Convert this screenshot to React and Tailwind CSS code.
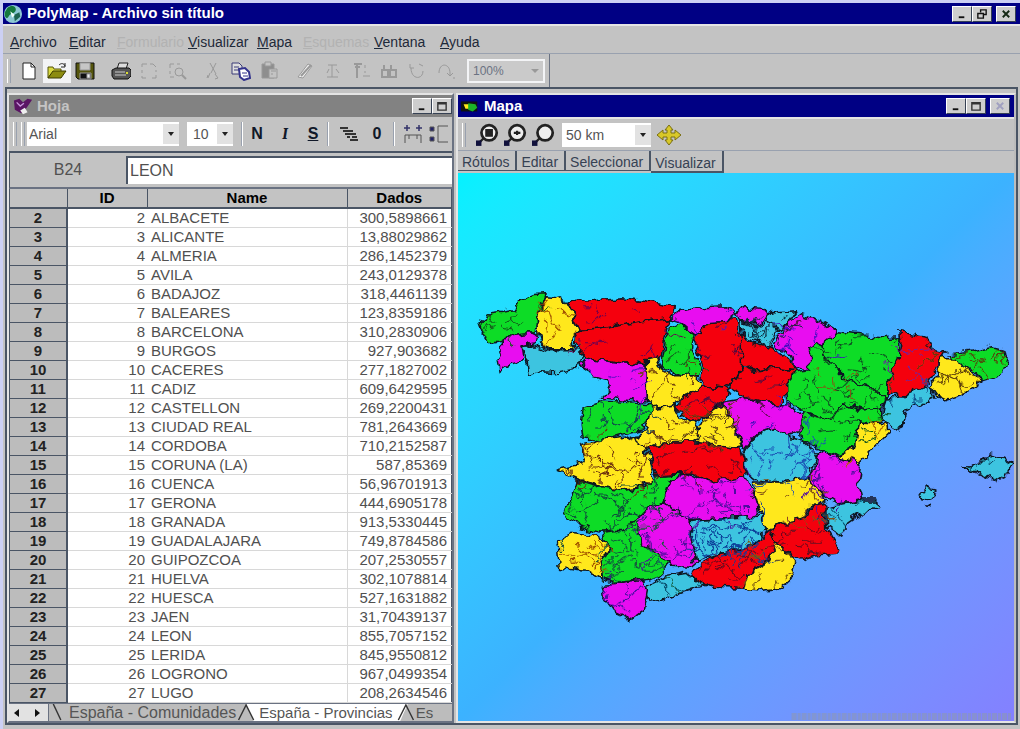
import React, { useState } from 'react';

const rows = [
  [2, 'ALBACETE', '300,5898661'],
  [3, 'ALICANTE', '13,88029862'],
  [4, 'ALMERIA', '286,1452379'],
  [5, 'AVILA', '243,0129378'],
  [6, 'BADAJOZ', '318,4461139'],
  [7, 'BALEARES', '123,8359186'],
  [8, 'BARCELONA', '310,2830906'],
  [9, 'BURGOS', '927,903682'],
  [10, 'CACERES', '277,1827002'],
  [11, 'CADIZ', '609,6429595'],
  [12, 'CASTELLON', '269,2200431'],
  [13, 'CIUDAD REAL', '781,2643669'],
  [14, 'CORDOBA', '710,2152587'],
  [15, 'CORUNA (LA)', '587,85369'],
  [16, 'CUENCA', '56,96701913'],
  [17, 'GERONA', '444,6905178'],
  [18, 'GRANADA', '913,5330445'],
  [19, 'GUADALAJARA', '749,8784586'],
  [20, 'GUIPOZCOA', '207,2530557'],
  [21, 'HUELVA', '302,1078814'],
  [22, 'HUESCA', '527,1631882'],
  [23, 'JAEN', '31,70439137'],
  [24, 'LEON', '855,7057152'],
  [25, 'LERIDA', '845,9550812'],
  [26, 'LOGRONO', '967,0499354'],
  [27, 'LUGO', '208,2634546']
];

const GREEN = '#0bdc28';
const YELLOW = '#ffe81a';
const RED = '#f5060c';
const PINK = '#e80cf0';
const CYAN = '#3cc4e0';

const provinces = [
  [GREEN, '478,323 490,314 512,311 519,300 530,295 545,294 541,307 536,316 534,333 520,334 508,336 498,342 488,344 482,334'],
  [YELLOW, '545,296 556,297 566,304 572,315 575,325 578,332 571,338 571,350 549,350 540,344 537,335 535,318 541,307'],
  [PINK, '500,340 510,335 528,333 536,335 534,343 520,346 522,360 510,364 498,373 496,358 501,350'],
  [CYAN, '520,347 534,345 549,351 571,351 580,348 583,354 578,364 571,370 556,373 540,372 528,376 526,362'],
  [RED, '566,302 590,301 622,299 650,303 674,307 668,319 640,322 620,326 590,331 578,330 574,318'],
  [RED, '578,331 600,329 640,322 668,319 662,340 660,358 650,364 620,363 585,358 573,347 574,337'],
  [PINK, '585,358 610,362 645,365 645,402 600,398 610,388 605,380 592,376 578,366'],
  [GREEN, '582,407 598,401 620,402 652,405 652,414 640,430 620,434 600,440 582,438 580,424'],
  [YELLOW, '645,360 655,358 660,370 672,376 698,376 698,388 682,398 672,405 655,410 645,400'],
  [GREEN, '664,340 668,328 680,324 693,334 690,348 700,366 697,376 680,376 660,368 662,355'],
  [PINK, '668,319 676,312 700,308 725,307 736,314 728,320 708,324 695,335 688,330 680,323'],
  [RED, '692,340 706,322 735,320 738,335 740,345 740,366 735,378 722,388 700,386 702,366'],
  [RED, '738,335 750,343 770,348 788,360 793,370 775,368 755,372 740,366 740,345'],
  [RED, '740,368 755,372 775,368 793,370 788,385 780,403 768,403 745,398 728,386 735,378'],
  [RED, '700,386 722,388 728,386 722,402 710,413 690,423 674,408 682,398'],
  [PINK, '735,312 745,307 762,309 766,318 755,325 738,321'],
  [CYAN, '738,322 755,327 768,320 778,330 776,333 768,346 752,341 740,335'],
  [CYAN, '766,316 775,312 795,311 788,322 778,330 768,324'],
  [PINK, '783,327 800,314 812,318 832,330 834,335 820,344 808,350 808,369 792,367 790,356 772,347'],
  [GREEN, '820,344 834,333 860,335 880,338 898,337 898,360 884,385 884,398 870,388 848,382 830,365 822,355'],
  [GREEN, '808,350 820,344 822,355 830,365 848,382 870,388 884,398 880,408 862,410 840,405 830,420 804,413 786,402 785,388 792,372 808,370'],
  [GREEN, '830,420 840,405 862,410 880,408 880,420 866,426 853,446 835,455 820,450 800,440 798,424 804,413'],
  [RED, '898,333 925,338 930,350 944,352 934,370 925,384 900,396 884,393 886,380 896,362 900,345'],
  [GREEN, '948,354 965,352 990,347 1003,350 1005,360 1000,375 980,381 968,370 955,362'],
  [YELLOW, '940,358 950,358 960,362 970,375 980,382 960,395 945,400 935,395 928,385 936,375'],
  [CYAN, '884,398 900,397 920,387 928,386 934,398 915,405 904,410 902,424 890,428 880,420'],
  [YELLOW, '857,422 885,424 886,434 870,450 858,463 836,456 853,446'],
  [PINK, '817,452 838,457 858,463 856,480 861,500 835,503 815,490 806,478 814,468'],
  [CYAN, '825,507 845,503 860,500 875,500 876,506 855,516 845,523 838,536 826,526'],
  [YELLOW, '752,482 775,482 805,478 817,490 825,500 808,508 802,520 785,521 765,532 760,515 754,500'],
  [RED, '811,506 823,504 825,528 836,548 834,554 812,556 800,560 784,552 774,540 768,532 785,521 805,517'],
  [CYAN, '740,455 755,435 775,427 790,437 800,440 817,454 806,478 780,482 755,480 745,472'],
  [PINK, '722,402 745,398 768,403 785,404 802,417 800,430 785,435 775,427 755,435 742,450 735,432 724,415'],
  [YELLOW, '700,420 722,404 730,420 740,447 725,449 700,444 688,435'],
  [YELLOW, '650,408 672,405 680,420 692,424 700,430 695,443 660,443 640,450 632,442 645,428'],
  [YELLOW, '578,445 600,439 625,436 642,446 650,465 652,480 640,486 620,490 595,485 575,478 556,470 580,464 584,456'],
  [RED, '645,448 665,443 700,443 738,449 745,475 735,480 710,482 690,473 655,475'],
  [PINK, '668,482 680,473 710,481 745,476 755,500 757,514 740,518 690,520 668,508 662,500'],
  [GREEN, '576,480 600,487 625,490 645,486 655,476 682,473 668,482 662,500 640,512 636,520 620,532 600,532 575,525 562,512 572,495'],
  [YELLOW, '556,545 570,532 595,535 608,545 600,560 602,580 585,570 558,567'],
  [GREEN, '600,532 620,530 636,520 640,545 655,550 668,562 660,575 642,580 612,582 602,578 601,560 608,548'],
  [PINK, '636,520 640,512 662,500 672,510 690,520 690,540 695,560 688,566 670,565 655,550 640,545'],
  [CYAN, '690,521 740,517 760,516 765,530 745,548 715,555 695,560 690,540'],
  [RED, '690,570 715,555 745,548 768,532 776,542 772,555 745,575 742,588 710,587 695,580'],
  [YELLOW, '774,541 784,552 795,563 790,578 778,588 760,590 742,588 745,575 768,560'],
  [CYAN, '646,585 668,575 685,572 705,585 680,592 660,600 648,602 644,592'],
  [PINK, '600,584 620,583 642,580 646,590 642,610 630,619 612,610 602,596'],
  [CYAN, '963,468 980,463 988,455 1000,458 1011,463 1005,475 995,482 980,475'],
  [CYAN, '918,495 925,488 934,490 930,499 920,500']
];

// [x, y, width, height, number of strokes, color]
const riverZones = [
  [480, 298, 60, 40, 10, '#145a1c'],
  [536, 298, 40, 50, 9, '#a05000'],
  [578, 302, 85, 58, 12, '#6c0050'],
  [582, 362, 62, 36, 7, '#5010c0'],
  [582, 404, 66, 32, 11, '#143c50'],
  [645, 362, 52, 80, 16, '#6c3c10'],
  [664, 328, 30, 46, 6, '#145a1c'],
  [672, 312, 60, 16, 4, '#5010c0'],
  [692, 325, 98, 85, 16, '#500840'],
  [742, 312, 48, 32, 14, '#102c40'],
  [775, 320, 55, 45, 9, '#4010c0'],
  [790, 336, 108, 112, 44, '#0c5020'],
  [800, 370, 78, 30, 5, '#8c5014'],
  [888, 338, 50, 50, 9, '#7020a0'],
  [930, 350, 72, 44, 26, '#5a3c08'],
  [882, 390, 48, 34, 9, '#10508c'],
  [850, 424, 34, 36, 5, '#b06400'],
  [730, 402, 70, 35, 6, '#5010c0'],
  [742, 430, 72, 50, 22, '#1c50b4'],
  [812, 456, 46, 44, 12, '#5008a0'],
  [825, 502, 45, 30, 8, '#0c5070'],
  [752, 482, 70, 45, 14, '#805014'],
  [780, 510, 52, 44, 9, '#640820'],
  [690, 408, 48, 38, 18, '#5c3c14'],
  [560, 440, 90, 48, 40, '#6c3010'],
  [646, 445, 95, 34, 12, '#640820'],
  [666, 476, 88, 42, 22, '#5008a0'],
  [565, 484, 98, 45, 34, '#10463c'],
  [558, 534, 46, 42, 14, '#a05000'],
  [602, 525, 62, 56, 26, '#145a3c'],
  [638, 505, 55, 60, 14, '#5008a0'],
  [692, 518, 70, 38, 44, '#0c3c98'],
  [694, 540, 80, 46, 10, '#640820'],
  [745, 545, 48, 44, 11, '#7c5a10'],
  [645, 572, 56, 26, 8, '#0c5070'],
  [602, 584, 42, 30, 10, '#4008a0'],
  [966, 458, 42, 22, 6, '#0c5070']
];

function buildRivers() {
  let seed = 17;
  const rand = () => {
    seed = (seed * 16807) % 2147483647;
    return seed / 2147483647;
  };
  const result = [];
  riverZones.forEach(([x, y, w, h, count, color]) => {
    let d = '';
    for (let i = 0; i < count; i++) {
      d += `M${Math.round(x + rand() * w)} ${Math.round(y + rand() * h)}`;
      const dx = rand() * 14 - 7;
      const dy = rand() * 12 - 6;
      for (let j = 0; j < 3; j++) {
        d += `l${Math.round(dx + rand() * 8 - 4)} ${Math.round(dy + rand() * 8 - 4)}`;
      }
    }
    result.push({ d, color });
  });
  return result;
}

const rivers = buildRivers();

const SpainMap = () => (
  <svg
    viewBox="457 174 555 546"
    className="block w-full h-full"
    preserveAspectRatio="xMidYMid meet"
    role="img"
    aria-label="Mapa"
  >
    <defs>
      <filter id="coast" x="-5%" y="-5%" width="110%" height="110%">
        <feTurbulence type="fractalNoise" baseFrequency="0.11" numOctaves="2" seed="4" />
        <feDisplacementMap in="SourceGraphic" scale="11" xChannelSelector="R" yChannelSelector="G" />
      </filter>
      <clipPath id="land">
        {provinces.map(([, points], i) => (
          <polygon key={i} points={points} />
        ))}
      </clipPath>
    </defs>
    <g filter="url(#coast)">
      <g stroke="#0c1420" strokeWidth="1.5" strokeLinejoin="round">
        {provinces.map(([fill, points], i) => (
          <polygon key={i} points={points} fill={fill} />
        ))}
        <path d="M924 506l5 0l2 2M989 487l2 1M897 426l6-3l2 2l-5 3z" fill="#0c1420" />
      </g>
      <g clipPath="url(#land)" fill="none" strokeWidth="1">
        {rivers.map((r, i) => (
          <path key={i} d={r.d} stroke={r.color} />
        ))}
      </g>
    </g>
    <path d="M790 716h220" stroke="#8c98b4" strokeOpacity="0.6" strokeWidth="7" strokeDasharray="5 1 3 1" />
  </svg>
);

const icons = {
  nuevo: (
    <>
      <path d="M4 2h8l4 4v12H4z" fill="#fff" stroke="#222" />
      <path d="M12 2v4h4" fill="none" stroke="#222" />
    </>
  ),
  abrir: (
    <>
      <path d="M1 17V6h5l1 2h7v3H6z" fill="#d8d840" stroke="#55550a" />
      <path d="M1 17l5-7h13l-5 7z" fill="#8c8c10" stroke="#3c3c00" />
      <path d="M12 4c2-2 5-2 6 1m0-3v4h-4" fill="none" stroke="#222" />
    </>
  ),
  guardar: (
    <>
      <path d="M1 2h18v16H3l-2-2z" fill="#55550c" stroke="#111" />
      <path d="M5 2h10v7H5z" fill="#c6c6c6" />
      <path d="M5 12h11v6H5z" fill="#111" />
      <path d="M12 13h3v4h-3z" fill="#eee" />
    </>
  ),
  imprimir: (
    <>
      <path d="M6 8l2-6h9l-2 6" fill="#ddd" stroke="#222" />
      <path d="M1 9l4-2h13l2 2v6l-3 3H3l-2-3z" fill="#555" stroke="#111" />
      <path d="M4 11h10M4 14h11" stroke="#ccc" />
      <path d="M15 12h2" stroke="#dd3" strokeWidth="2" />
    </>
  ),
  pagina: <path d="M3 3h5M3 3v3M3 9v3M3 15v2h4M11 3h3l3 3M17 9v2M17 14v3h-4" />,
  vista: (
    <>
      <path d="M3 3h4M10 3h3M3 3v4M3 10v3M3 16h4" />
      <circle cx="12" cy="11" r="4" />
      <path d="M15 14l4 4" strokeWidth="2" />
    </>
  ),
  cortar: <path d="M7 2l6 11M13 2L8 12M7 12l-2 5M12 13l3 4l-3 1M5 14l-1 3" />,
  copiar: (
    <>
      <path d="M1 2h7l3 3v8H1z" fill="#ddd" stroke="#3c3c78" />
      <path d="M3 6h5M3 9h6" stroke="#3c3c78" />
      <path d="M8 8l6-1l4 4l1 6l-6 2l-4-3z" fill="#fff" stroke="#33338c" strokeWidth="2" />
      <path d="M11 12h5M12 15h5" stroke="#33338c" />
    </>
  ),
  pegar: (
    <>
      <path d="M3 3h12v14H3z" fill="#8e8e8e" />
      <path d="M6 1h6v4H6zM10 8h8v9h-8z" fill="#c3c3c3" />
      <path d="M12 10h5M12 13h2" />
    </>
  ),
  borrar: (
    <>
      <path d="M3 16L13 3l4 2L8 17z" fill="#eee" />
      <path d="M6 15L16 4" strokeWidth="2" />
    </>
  ),
  sumar: <path d="M5 4h9M9 4v12M4 16h11M6 8l-2 4M13 8l3 4" />,
  insertar: (
    <>
      <path d="M3 3h8M4 6h5M6 3v14" strokeWidth="2" />
      <path d="M14 4v3M14 10v2M12 15h7" />
    </>
  ),
  buscar: (
    <>
      <path d="M5 4v5M12 4v5M3 9h6v7H3zM11 9h6v7h-6z" strokeWidth="2" />
      <path d="M9 11h3" />
    </>
  ),
  deshacer: <path d="M3 3v4h4M4 7c0 12 12 12 12 3M12 3l4 2" />,
  rehacer: <path d="M4 12c0-11 11-10 11 0M15 12v3M12 12l3 3l3-3M18 17h2" />
};

const ToolButton = ({ name, label, active, disabled }) => (
  <button
    type="button"
    aria-label={label}
    disabled={disabled}
    className={`flex h-6 w-7 shrink-0 items-center justify-center ${active ? 'bg-gray-100' : ''}`}
  >
    <svg viewBox="0 0 20 20" className="h-5 w-5" fill="none" stroke="#999">
      {icons[name]}
    </svg>
  </button>
);

const toolGroups = [
  [
    ['nuevo', 'Nuevo'],
    ['abrir', 'Abrir', true],
    ['guardar', 'Guardar']
  ],
  [
    ['imprimir', 'Imprimir'],
    ['pagina', 'Página', false, true],
    ['vista', 'Vista previa', false, true]
  ],
  [
    ['cortar', 'Cortar', false, true],
    ['copiar', 'Copiar'],
    ['pegar', 'Pegar', false, true]
  ],
  [
    ['borrar', 'Borrar', false, true],
    ['sumar', 'Sumar', false, true],
    ['insertar', 'Insertar', false, true],
    ['buscar', 'Buscar', false, true],
    ['deshacer', 'Deshacer', false, true],
    ['rehacer', 'Rehacer', false, true]
  ]
];

const windowGlyphs = {
  min: <path d="M3 10h6" stroke="#111" strokeWidth="2" />,
  max: <path d="M2 3h9v8H2zM2 4h9" fill="none" stroke="#333" strokeWidth="1.5" />,
  restore: (
    <>
      <path d="M5 5V2h6v5H8" fill="none" stroke="#111" strokeWidth="1.5" />
      <path d="M2 6h6v5H2z" fill="none" stroke="#111" strokeWidth="1.5" />
    </>
  ),
  close: <path d="M3 3l7 7M10 3l-7 7" stroke="#142814" strokeWidth="2" />,
  closeDim: <path d="M3 3l7 7M10 3l-7 7" stroke="#a0a0c0" strokeWidth="2" />
};

const WindowButton = ({ glyph, label }) => (
  <button
    type="button"
    aria-label={label}
    className="flex h-4 w-5 shrink-0 items-center justify-center border border-t-white border-l-white border-r-gray-700 border-b-gray-700 bg-[#cecece]"
  >
    <svg viewBox="0 0 13 13" className="h-3 w-3">
      {windowGlyphs[glyph]}
    </svg>
  </button>
);

const Grip = () => <div className="h-6 w-1 shrink-0 border-l border-white border-r border-r-gray-400"></div>;

const Separator = () => <div className="h-6 w-0.5 shrink-0 border-l border-gray-400 bg-white"></div>;

const DropDown = ({ label, value, className }) => (
  <div className={`flex h-6 shrink-0 items-center bg-white ${className}`}>
    <select aria-label={label} defaultValue={value} className="min-w-0 flex-1 appearance-none bg-transparent text-sm text-[#555] outline-none">
      <option>{value}</option>
    </select>
    <span className="flex h-5 w-4 items-center justify-center bg-[#e2e2e2]">
      <svg viewBox="0 0 8 8" className="h-2 w-2">
        <path d="M1 2h6L4 6z" fill="#222" />
      </svg>
    </span>
  </div>
);

const menus = [
  ['A', 'rchivo', 'w-[59px]'],
  ['E', 'ditar', 'w-[48px]'],
  ['F', 'ormulario', 'w-[71px]', true],
  ['V', 'isualizar', 'w-[69px]'],
  ['M', 'apa', 'w-[46px]'],
  ['E', 'squemas', 'w-[71px]', true],
  ['V', 'entana', 'w-[66px]'],
  ['A', 'yuda', 'w-[60px]']
];

const ZoomIcon = ({ label, children }) => (
  <button type="button" aria-label={label} className="flex h-6 w-7 shrink-0 items-center justify-center">
    <svg viewBox="0 0 22 22" className="h-6 w-6" fill="none" stroke="#222">
      <circle cx="12" cy="9" r="7" fill="#eee" strokeWidth="2.5" />
      <path d="M7 14l-4 4" strokeWidth="2" />
      <path d="M0 16h5v5H0z" fill="#11113c" stroke="none" />
      {children}
    </svg>
  </button>
);

const Sheet = ({ cell, setCell }) => (
  <section className="flex min-h-0 min-w-0 flex-col overflow-hidden border-2 border-t-[#e4e4e4] border-l-[#e4e4e4] border-r-gray-500 border-b-gray-500">
    <header className="flex h-[22px] shrink-0 items-center bg-[#828282]">
      <svg viewBox="0 0 22 20" className="mx-1 h-5 w-5 shrink-0">
        <path d="M1 4l6-2l4 4l5-4l5 1l-6 9l-6 6l-7-4z" fill="#5a1464" />
        <path d="M4 6l4 4l4-3" fill="none" stroke="#c896dc" strokeWidth="1.5" />
        <path d="M8 15l5-3l3 5l-5 2z" fill="#eee" />
      </svg>
      <h2 className="flex-1 text-[15px] font-bold text-[#c4c4c4]">Hoja</h2>
      <WindowButton glyph="min" label="Minimizar hoja" />
      <WindowButton glyph="max" label="Maximizar hoja" />
    </header>

    <div className="flex h-9 shrink-0 items-center overflow-hidden border-b-2 border-gray-600">
      <div className="flex w-[18px] shrink-0 gap-1 pl-1">
        <Grip />
        <Grip />
      </div>
      <DropDown label="Fuente" value="Arial" className="w-[152px] pl-0.5" />
      <DropDown label="Tamaño" value="10" className="ml-2 w-[46px] pl-1.5" />
      <div className="ml-2 flex">
        <Separator />
      </div>
      <button type="button" className="w-7 shrink-0 text-base font-black text-gray-900">N</button>
      <button type="button" className="w-7 shrink-0 font-serif text-base font-black text-gray-900 italic">I</button>
      <button type="button" className="w-7 shrink-0 text-base font-black text-gray-900 underline">S</button>
      <Separator />
      <button type="button" aria-label="Formato de número" className="ml-1 flex w-8 shrink-0 justify-center">
        <svg viewBox="0 0 20 18" className="h-5 w-5" stroke="#333" strokeWidth="2">
          <path d="M1 3h8M4 6h10M6 9h11M8 12h3M13 12h5M11 15h8" />
        </svg>
      </button>
      <button type="button" className="w-6 shrink-0 text-base font-black text-gray-900">0</button>
      <div className="mx-1 flex">
        <Separator />
      </div>
      <button type="button" aria-label="Ancho de columna" className="flex w-7 shrink-0 justify-center">
        <svg viewBox="0 0 20 20" className="h-5 w-5" fill="none" stroke="#33336a">
          <path d="M1 4h6M4 1v6M13 4h6M16 1v6" strokeWidth="1.5" />
          <path d="M2 19v-8h16v8M6 11v4M14 11v4" stroke="#555" />
        </svg>
      </button>
      <button type="button" aria-label="Alto de fila" className="flex w-6 shrink-0 justify-center">
        <svg viewBox="0 0 20 20" className="h-5 w-5" fill="none" stroke="#555">
          <path d="M1 3h4v4H1zM1 13h4v4H1z" fill="#22226a" />
          <path d="M19 2H9v16h10" />
        </svg>
      </button>
    </div>

    <div className="flex h-9 shrink-0 items-center border-b-2 border-gray-500 border-l border-l-gray-600 text-base text-[#505050]">
      <label htmlFor="cell" className="w-[116px] text-center">B24</label>
      <input
        id="cell"
        value={cell}
        onChange={e => setCell(e.target.value)}
        className="h-7 min-w-0 flex-1 border-t-2 border-l-2 border-gray-600 bg-white pl-0.5 text-base outline-none"
      />
    </div>

    <div className="min-h-0 flex-1 overflow-hidden border-l border-gray-600 bg-white">
      <table className="w-full table-fixed border-collapse text-[15px] leading-[18px] text-[#505050]">
        <colgroup>
          <col className="w-[57px]" />
          <col className="w-[80px]" />
          <col className="w-[200px]" />
          <col />
        </colgroup>
        <thead>
          <tr className="h-[19px] border-b-2 border-gray-600 bg-[#c3c3c3] text-[15px] leading-4 text-black">
            <th className="border-r border-gray-600 p-0"></th>
            <th className="border-r border-gray-600 p-0">ID</th>
            <th className="border-r border-gray-600 p-0">Name</th>
            <th className="border-r border-gray-600 p-0">Dados</th>
          </tr>
        </thead>
        <tbody>
          {rows.map(([id, name, dados]) => (
            <tr key={id} className="h-[19px]">
              <th className="border-r-2 border-b border-gray-600 bg-[#bcbcbc] p-0 text-[#222]">{id}</th>
              <td className="border-b border-[#d8d8d8] p-0 pr-0.5 text-right">{id}</td>
              <td className="border-b border-[#d8d8d8] p-0 pl-1">{name}</td>
              <td className="border-l border-r border-b border-[#d8d8d8] border-r-gray-600 p-0 pr-1 text-right">{dados}</td>
            </tr>
          ))}
        </tbody>
      </table>
    </div>

    <nav className="flex h-[18px] shrink-0 items-stretch overflow-hidden border-t border-gray-500 bg-[#bcbcbc] text-[15px] leading-4 text-[#555]">
      <button type="button" aria-label="Anterior" className="w-5 shrink-0 bg-[#e2e2e2] pl-1">
        <svg viewBox="0 0 8 8" className="h-2 w-2"><path d="M6 0v8L1 4z" fill="#111" /></svg>
      </button>
      <button type="button" aria-label="Siguiente" className="w-5 shrink-0 border-r border-gray-500 bg-[#e2e2e2] pl-1">
        <svg viewBox="0 0 8 8" className="h-2 w-2"><path d="M2 0v8l5-4z" fill="#111" /></svg>
      </button>
      <svg viewBox="0 0 18 18" className="w-[18px] shrink-0"><path d="M4 0l8 17" stroke="#333" strokeWidth="1.5" /></svg>
      <button type="button" className="shrink-0 pl-0.5 whitespace-nowrap text-[16px]">España - Comunidades</button>
      <svg viewBox="0 0 24 18" className="w-6 shrink-0">
        <path d="M10 0h14v18h-6z" fill="#fff" />
        <path d="M2 17L10 1l8 16" fill="none" stroke="#333" strokeWidth="1.5" />
      </svg>
      <button type="button" className="-mx-px shrink-0 bg-white whitespace-nowrap">España - Provincias</button>
      <svg viewBox="0 0 24 18" className="w-6 shrink-0">
        <path d="M0 0h16L8 18H0z" fill="#fff" />
        <path d="M6 17L14 1l8 16" fill="none" stroke="#333" strokeWidth="1.5" />
      </svg>
      <button type="button" className="shrink-0">Es</button>
    </nav>
  </section>
);

const MapWindow = () => {
  const tabs = ['Rótulos', 'Editar', 'Seleccionar', 'Visualizar'];
  const [tab, setTab] = useState('Visualizar');

  return (
    <section className="flex min-h-0 min-w-0 flex-col border-2 border-[#e4e4e4] border-r-[#bcbcbc]">
      <header className="flex h-[22px] shrink-0 items-center bg-[#000084] pr-1">
        <svg viewBox="0 0 22 20" className="ml-0.5 h-5 w-5 shrink-0">
          <path d="M1 5h18v11H1z" fill="#101410" />
          <path d="M4 8h6v5H6z" fill="#ffe81a" />
          <path d="M9 7l8 1l2 4l-5 4l-5-2z" fill="#1cb428" />
        </svg>
        <h2 className="ml-1 flex-1 text-[15px] font-bold text-white">Mapa</h2>
        <WindowButton glyph="min" label="Minimizar mapa" />
        <WindowButton glyph="max" label="Maximizar mapa" />
        <div className="ml-1 flex">
          <WindowButton glyph="closeDim" label="Cerrar mapa" />
        </div>
      </header>

      <div className="flex h-[34px] shrink-0 items-center border-t-2 border-b border-t-[#e4e4e4] border-b-gray-400">
        <div className="flex w-4 shrink-0 gap-1 pl-1">
          <Grip />
        </div>
        <ZoomIcon label="Acercar">
          <path d="M9 6h6v6H9z" fill="#222" />
        </ZoomIcon>
        <ZoomIcon label="Alejar">
          <path d="M9 9h6M12 7v4" strokeWidth="2" />
        </ZoomIcon>
        <ZoomIcon label="Ver todo" />
        <DropDown label="Escala" value="50 km" className="ml-1 w-[89px] pl-1" />
        <button type="button" aria-label="Desplazar" className="ml-1 flex h-6 w-7 items-center justify-center">
          <svg viewBox="0 0 24 20" className="h-5 w-6">
            <path d="M12 0l4 5h-2v3h4V5l6 5l-6 5v-3h-4v3h2l-4 5l-4-5h2v-3H6v3l-6-5l6-5v3h4V5H8z" fill="#d8c828" stroke="#786e14" />
          </svg>
        </button>
      </div>

      <nav className="flex h-[22px] shrink-0 items-start text-sm leading-4 text-gray-700">
        {tabs.map(t => (
          <button
            key={t}
            type="button"
            onClick={() => setTab(t)}
            className={`shrink-0 border-r-2 border-gray-600 pr-1.5 pl-1 ${
              t === tab ? 'h-[22px] border-b-2 pt-1 leading-4' : 'h-5 border-b pt-0.5 leading-4'
            }`}
          >
            {t}
          </button>
        ))}
      </nav>

      <div className="min-h-0 flex-1 bg-linear-to-br from-[#04f2ff] via-[#3cb2ff] to-[#8480ff]">
        <SpainMap />
      </div>
    </section>
  );
};

const App = () => {
  const [cell, setCell] = useState('LEON');

  return (
    <div className="flex h-screen flex-col overflow-hidden border-t-3 border-l-3 border-[#ccd0f4] bg-[#c3c3c3] font-['Liberation_Sans',Arial,sans-serif]">
      <header className="flex h-[21px] shrink-0 items-center bg-[#000084] pr-1">
        <svg viewBox="0 0 22 22" className="mr-1 h-5 w-5 shrink-0">
          <circle cx="11" cy="11" r="10" fill="#8cc8d4" />
          <path d="M5 4c5-4 10-1 9 3s-6 3-8 7s-5-1-4-5z" fill="#14783c" />
          <path d="M12 12l6-3l1 5l-6 5z" fill="#1c6450" />
          <path d="M8 8l5 4l-3 3z" fill="#f0fff8" />
        </svg>
        <h1 className="flex-1 text-[15px] font-bold text-white">PolyMap - Archivo sin título</h1>
        <WindowButton glyph="min" label="Minimizar" />
        <WindowButton glyph="restore" label="Restaurar" />
        <div className="ml-1 flex">
          <WindowButton glyph="close" label="Cerrar" />
        </div>
      </header>

      <nav className="flex h-[30px] shrink-0 items-center border-t-2 border-b border-t-[#e4e4e4] border-b-gray-400 pt-1 pl-[7px] text-sm text-gray-800">
        {menus.map(([key, rest, width, disabled], i) => (
          <button
            key={i}
            type="button"
            disabled={disabled}
            className={`shrink-0 text-left ${width} ${disabled ? 'text-[#b2b2b2]' : ''}`}
          >
            <span className="underline">{key}</span>
            {rest}
          </button>
        ))}
      </nav>

      <div className="flex h-[33px] shrink-0 items-center">
        <div className="flex h-full items-center border-r border-gray-500 pr-1 pl-1">
          <Grip />
          <div className="ml-1 flex items-center gap-2">
            {toolGroups.map((group, i) => (
              <div key={i} className="flex">
                {group.map(([name, label, active, disabled]) => (
                  <ToolButton key={name} name={name} label={label} active={active} disabled={disabled} />
                ))}
              </div>
            ))}
            <div className="flex h-6 w-[78px] items-center border-2 border-gray-100 bg-[#cacaca] px-1">
              <select aria-label="Zoom" disabled defaultValue="100%" className="min-w-0 flex-1 appearance-none bg-transparent text-xs text-gray-500">
                <option>100%</option>
              </select>
              <svg viewBox="0 0 8 8" className="h-2 w-2">
                <path d="M0 2h8L4 6z" fill="#999" />
              </svg>
            </div>
          </div>
        </div>
      </div>

      <main className="mr-0.5 mb-1 ml-0.5 grid min-h-0 flex-1 grid-cols-[447fr_560fr] gap-x-0.5 border-2 border-gray-600 bg-[#c3c3c3] pt-1 [&>section]:bg-[#c3c3c3]">
        <Sheet cell={cell} setCell={setCell} />
        <MapWindow />
      </main>
    </div>
  );
};

export default App;
